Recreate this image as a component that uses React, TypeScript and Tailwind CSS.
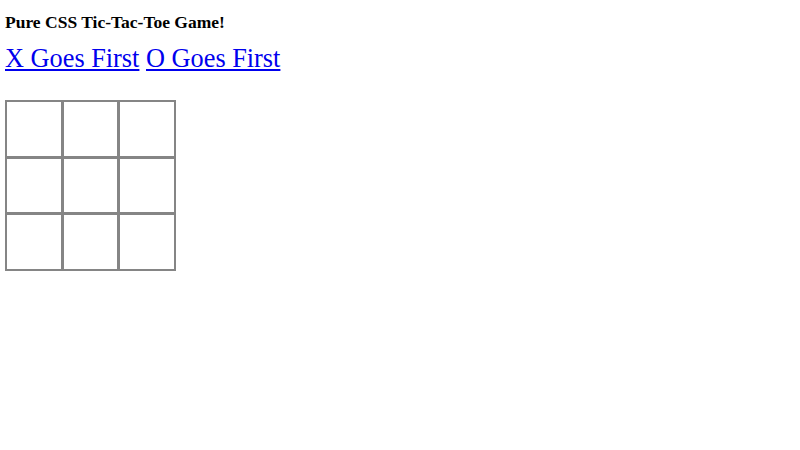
export default function App() {
  const cells = Array.from({ length: 9 }, (_, i) => i);
  return (
    <div className="p-[5px] font-['Liberation_Serif',serif] text-black bg-white min-h-[450px]">
      <h3 className="text-[17.5px] font-bold leading-[20px] mt-[7px]">Pure CSS Tic-Tac-Toe Game!</h3>
      <div className="mt-[12px] text-[26.3px] leading-[30px]">
        <a href="#" className="text-[#0000ee] underline">X Goes First</a>{" "}
        <a href="#" className="text-[#0000ee] underline">O Goes First</a>
      </div>
      {/* board: gray backing shows through the gaps as grid lines */}
      <div className="mt-[26px] grid grid-cols-[54px_53px_54px] grid-rows-[54px_53px_54px] gap-[3px] p-[2px] w-[171px] bg-[#858585]">
        {cells.map((i) => (
          <div key={i} className="bg-white" />
        ))}
      </div>
    </div>
  );
}
